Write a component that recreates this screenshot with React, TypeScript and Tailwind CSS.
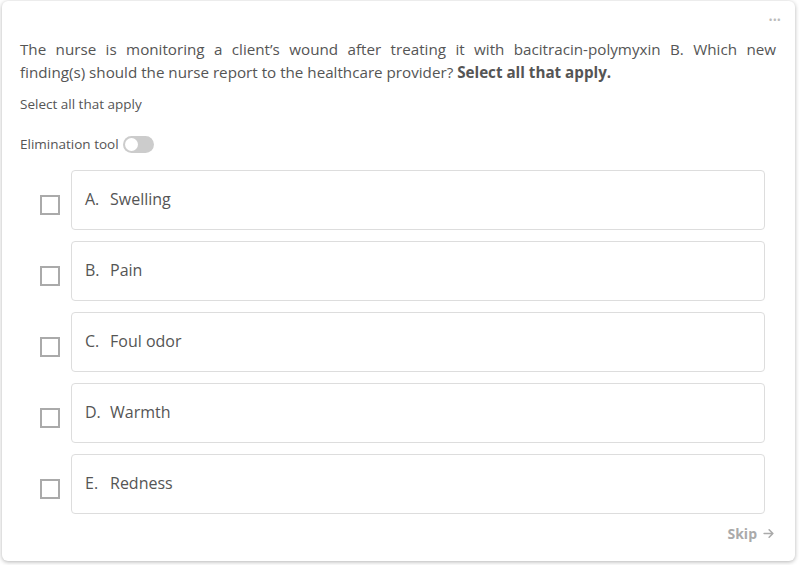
import React from "react";

const options = [
  { l: "A.", t: "Swelling" },
  { l: "B.", t: "Pain" },
  { l: "C.", t: "Foul odor" },
  { l: "D.", t: "Warmth" },
  { l: "E.", t: "Redness" },
];

export default function App() {
  return (
    <div className="w-[799px] h-[565px] bg-white pl-[2px] pr-[4px] pt-[1px] pb-[4px]" style={{ fontFamily: "'Open Sans', 'Noto Sans', sans-serif" }}>
      <div className="relative h-full rounded-[6px] bg-white shadow-[0_1px_4px_rgba(0,0,0,0.3)] pl-[18px] pr-[19px] pt-[37px] text-[#555]">
        <div className="absolute right-[14px] top-[13px] text-[11px] text-[#bbb] leading-none">•••</div>
        <div className="text-[15.2px] leading-[23px] text-[#555]">
          <div className="text-justify [text-align-last:justify] whitespace-nowrap">The nurse is monitoring a client’s wound after treating it with bacitracin-polymyxin B. Which new</div>
          <div>finding(s) should the nurse report to the healthcare provider? <b className="font-bold">Select all that apply.</b></div>
        </div>
        <div className="mt-[10px] text-[13.5px] leading-[20px]">Select all that apply</div>
        <div className="mt-[20px] flex items-center text-[13.5px] leading-[20px]">
          <span>Elimination tool</span>
          <span className="ml-[4px] relative inline-block w-[31px] h-[17px] rounded-full bg-[#ccc]">
            <span className="absolute left-[2px] top-[2px] w-[13px] h-[13px] rounded-full bg-white" />
          </span>
        </div>
        <div className="mt-[16px] mr-[11px] flex flex-col gap-[11px]">
          {options.map((o) => (
            <div key={o.l} className="flex items-center">
              <div className="ml-[20px] mt-[10px] w-[20px] h-[20px] border-2 border-[#aaa] bg-white shrink-0" />
              <div className="ml-[11px] flex-1 h-[60px] rounded-[4px] border border-[#ddd] flex items-center pl-[13px] pb-[3px] text-[16px]">
                <span className="w-[25px]">{o.l}</span>
                <span>{o.t}</span>
              </div>
            </div>
          ))}
        </div>
        <div className="mt-[9px] flex justify-end items-center text-[14px] font-bold text-[#aaa]">
          <span>Skip</span>
          <svg width="15" height="15" viewBox="0 0 24 24" fill="none" stroke="#aaa" strokeWidth="2.5" strokeLinecap="round" strokeLinejoin="round" className="ml-[4px]">
            <path d="M5 12h14M13 6l6 6-6 6" />
          </svg>
        </div>
      </div>
    </div>
  );
}
